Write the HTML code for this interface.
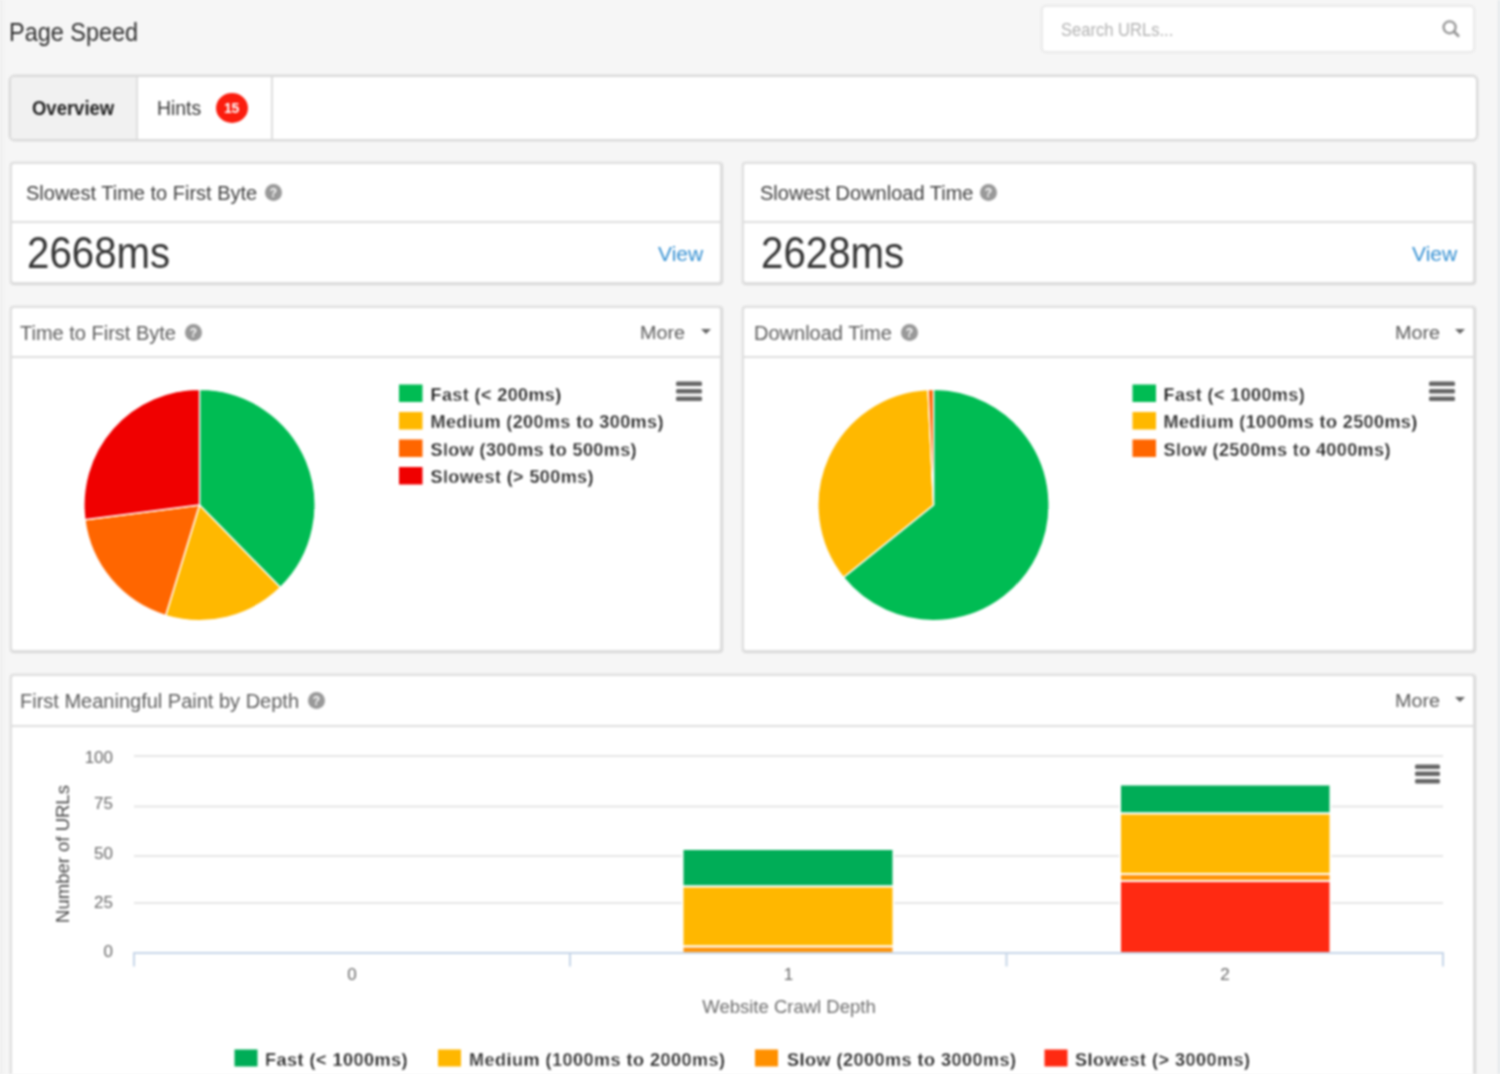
<!DOCTYPE html>
<html lang="en">
<head>
<meta charset="utf-8">
<title>Page Speed</title>
<style>
*{box-sizing:border-box;margin:0;padding:0}
html,body{width:1500px;height:1074px;overflow:hidden}
body{filter:blur(1px);background:#f6f6f6;font-family:"Liberation Sans",sans-serif;color:#555;position:relative}
.t{position:absolute;line-height:1;white-space:nowrap;transform-origin:0 0;font-weight:400}
.card{position:absolute;background:#fff;border:2px solid #dedede;border-radius:4px;box-shadow:.5px .5px 1.5px rgba(0,0,0,.14)}
.card .hd{position:absolute;left:0;right:0;top:0;border-bottom:2px solid #dedede}
h1.t{font-size:26px;color:#303030}
.q{position:absolute;width:17px;height:17px}
.caret{position:absolute;width:0;height:0;border-left:5px solid transparent;border-right:5px solid transparent;border-top:5px solid #666}
svg{position:absolute;left:0;top:0;overflow:visible}
svg text{font-family:"Liberation Sans",sans-serif}
</style>
</head>
<body>

<i style="position:absolute;left:1498px;top:-5px;width:8px;height:1090px;background:#e3e7eb"></i>
<i style="position:absolute;left:-4px;top:-5px;width:9px;height:1090px;background:linear-gradient(90deg,#ededed 45%,rgba(246,246,246,0))"></i>
<!-- ===== header ===== -->
<h1 class="t" style="left:9px;top:19px;font-size:26.5px;transform:scaleX(.885)">Page Speed</h1>

<div id="search" class="card" style="left:1041px;top:5px;width:434px;height:48px;border-color:#e9e9e9;border-radius:5px;box-shadow:0 0 2px rgba(0,0,0,.04)">
  <span class="t" style="left:18px;top:14px;font-size:18px;color:#b2b2b2;transform:scaleX(.92)">Search URLs...</span>
  <svg width="24" height="24" viewBox="0 0 24 24" style="left:397px;top:10px"><circle cx="9.6" cy="10.3" r="6" fill="none" stroke="#969696" stroke-width="2.3"/><path d="M13.9 14.6 L18.2 18.7" stroke="#969696" stroke-width="2.8" stroke-linecap="round"/></svg>
</div>

<!-- ===== tabs ===== -->
<nav id="tabs" class="card" style="left:9px;top:75px;width:1469px;height:66px;border-color:#dadada;border-radius:6px;box-shadow:0 0 2px rgba(0,0,0,.16)">
  <a style="position:absolute;left:0;top:0;width:126.5px;height:62px;background:#f1f1f1;border-right:2px solid #dfdfdf;border-radius:4px 0 0 4px">
    <b class="t" style="left:21px;top:19.5px;font-size:21px;color:#1e1e1e;font-weight:700;transform:scaleX(.88)">Overview</b>
  </a>
  <a style="position:absolute;left:126px;top:0;width:135.5px;height:62px;border-right:2px solid #dfdfdf">
    <span class="t" style="left:20px;top:21px;font-size:20px;color:#353535;transform:scaleX(.97)">Hints</span>
    <span style="position:absolute;left:79px;top:15.5px;width:32px;height:30px;border-radius:50%;background:#fb1d0e"></span>
    <span class="t" style="left:87px;top:24px;font-size:14px;color:#fff;font-weight:700;letter-spacing:-.4px">15</span>
  </a>
</nav>

<!-- ===== stat cards ===== -->
<section id="c1" class="card" style="left:10px;top:162px;width:712px;height:122px">
  <div class="hd" style="height:59px"></div>
  <span class="t" style="left:14px;top:19px;font-size:20px;color:#3e3e3e">Slowest Time to First Byte</span>
  <svg class="q" viewBox="0 0 17 17" style="left:253px;top:20px"><circle cx="8.5" cy="8.5" r="8.5" fill="#999"/><text x="8.5" y="13" font-size="12" font-weight="700" fill="#fff" text-anchor="middle">?</text></svg>
  <span class="t" style="left:15px;top:67.5px;font-size:43.5px;color:#363636;transform:scaleX(.925)">2668ms</span>
  <a class="t" style="left:646px;top:78.5px;font-size:21px;color:#3590d2">View</a>
</section>

<section id="c2" class="card" style="left:742px;top:162px;width:733px;height:122px">
  <div class="hd" style="height:59px"></div>
  <span class="t" style="left:16px;top:19px;font-size:20px;color:#3e3e3e">Slowest Download Time</span>
  <svg class="q" viewBox="0 0 17 17" style="left:236px;top:20px"><circle cx="8.5" cy="8.5" r="8.5" fill="#999"/><text x="8.5" y="13" font-size="12" font-weight="700" fill="#fff" text-anchor="middle">?</text></svg>
  <span class="t" style="left:17px;top:67.5px;font-size:43.5px;color:#363636;transform:scaleX(.925)">2628ms</span>
  <a class="t" style="left:668px;top:78.5px;font-size:21px;color:#3590d2">View</a>
</section>

<!-- ===== pie cards ===== -->
<section id="c3" class="card" style="left:10px;top:306px;width:712px;height:346px">
  <div class="hd" style="height:50px"></div>
  <span class="t" style="left:8px;top:15px;font-size:20px;color:#5c5c5c">Time to First Byte</span>
  <svg class="q" viewBox="0 0 17 17" style="left:173px;top:16px"><circle cx="8.5" cy="8.5" r="8.5" fill="#999"/><text x="8.5" y="13" font-size="12" font-weight="700" fill="#fff" text-anchor="middle">?</text></svg>
  <span class="t" style="left:628px;top:15.5px;font-size:18px;color:#5c5c5c;transform:scaleX(1.1)">More</span>
  <i class="caret" style="left:689px;top:21px"></i>
</section>

<section id="c4" class="card" style="left:742px;top:306px;width:733px;height:346px">
  <div class="hd" style="height:50px"></div>
  <span class="t" style="left:10px;top:15px;font-size:20px;color:#5c5c5c">Download Time</span>
  <svg class="q" viewBox="0 0 17 17" style="left:156.5px;top:16px"><circle cx="8.5" cy="8.5" r="8.5" fill="#999"/><text x="8.5" y="13" font-size="12" font-weight="700" fill="#fff" text-anchor="middle">?</text></svg>
  <span class="t" style="left:651px;top:15.5px;font-size:18px;color:#5c5c5c;transform:scaleX(1.1)">More</span>
  <i class="caret" style="left:711px;top:21px"></i>
</section>

<!-- ===== bar card ===== -->
<section id="c5" class="card" style="left:10px;top:674px;width:1465px;height:420px">
  <div class="hd" style="height:51px"></div>
  <span class="t" style="left:8px;top:15px;font-size:20px;color:#5c5c5c">First Meaningful Paint by Depth</span>
  <svg class="q" viewBox="0 0 17 17" style="left:296px;top:16px"><circle cx="8.5" cy="8.5" r="8.5" fill="#999"/><text x="8.5" y="13" font-size="12" font-weight="700" fill="#fff" text-anchor="middle">?</text></svg>
  <span class="t" style="left:1383px;top:15.5px;font-size:18px;color:#5c5c5c;transform:scaleX(1.1)">More</span>
  <i class="caret" style="left:1443px;top:21px"></i>
</section>

<!-- ===== charts (page coordinates) ===== -->
<svg id="charts" width="1500" height="1074" viewBox="0 0 1500 1074">
  <!-- pie 1 -->
  <g stroke="#fff" stroke-width="1.4" stroke-linejoin="round">
    <path d="M199.5,505 L199.50,389.40 A115.6,115.6 0 0 1 280.38,587.59 Z" fill="#00bc53"/>
    <path d="M199.5,505 L280.38,587.59 A115.6,115.6 0 0 1 165.70,615.55 Z" fill="#ffb800"/>
    <path d="M199.5,505 L165.70,615.55 A115.6,115.6 0 0 1 84.84,519.69 Z" fill="#ff6600"/>
    <path d="M199.5,505 L84.84,519.69 A115.6,115.6 0 0 1 199.50,389.40 Z" fill="#f00000"/>
  </g>
  <!-- pie 1 legend -->
  <g font-size="18" font-weight="700" fill="#1c1c1c" letter-spacing=".4" stroke="#fff" stroke-width=".3">
    <rect x="399" y="384.5" width="23.5" height="17.5" stroke="none" fill="#00bc53"/><text x="430.5" y="400.5">Fast (&lt; 200ms)</text>
    <rect x="399" y="412" width="23.5" height="17.5" stroke="none" fill="#ffb800"/><text x="430.5" y="428">Medium (200ms to 300ms)</text>
    <rect x="399" y="439.5" width="23.5" height="17.5" stroke="none" fill="#ff6600"/><text x="430.5" y="455.5">Slow (300ms to 500ms)</text>
    <rect x="399" y="467" width="23.5" height="17.5" stroke="none" fill="#f00000"/><text x="430.5" y="483">Slowest (&gt; 500ms)</text>
  </g>
  <g fill="#666"><rect x="676" y="381.5" width="26" height="4.5" rx="1.5"/><rect x="676" y="389" width="26" height="4.5" rx="1.5"/><rect x="676" y="396.5" width="26" height="4.5" rx="1.5"/></g>

  <!-- pie 2 -->
  <g stroke="#fff" stroke-width="1.4" stroke-linejoin="round">
    <path d="M933.5,505 L933.50,389.40 A115.6,115.6 0 1 1 843.41,577.44 Z" fill="#00bc53"/>
    <path d="M933.5,505 L843.41,577.44 A115.6,115.6 0 0 1 928.05,389.53 Z" fill="#ffb800"/>
    <path d="M933.5,505 L928.05,389.53 A115.6,115.6 0 0 1 933.50,389.40 Z" fill="#ff6600"/>
  </g>
  <!-- pie 2 legend -->
  <g font-size="18" font-weight="700" fill="#1c1c1c" letter-spacing=".4" stroke="#fff" stroke-width=".3">
    <rect x="1132.5" y="384.5" width="23.5" height="17.5" stroke="none" fill="#00bc53"/><text x="1163.5" y="400.5">Fast (&lt; 1000ms)</text>
    <rect x="1132.5" y="412" width="23.5" height="17.5" stroke="none" fill="#ffb800"/><text x="1163.5" y="428">Medium (1000ms to 2500ms)</text>
    <rect x="1132.5" y="439.5" width="23.5" height="17.5" stroke="none" fill="#ff6600"/><text x="1163.5" y="455.5">Slow (2500ms to 4000ms)</text>
  </g>
  <g fill="#666"><rect x="1429" y="381.5" width="26" height="4.5" rx="1.5"/><rect x="1429" y="389" width="26" height="4.5" rx="1.5"/><rect x="1429" y="396.5" width="26" height="4.5" rx="1.5"/></g>

  <!-- bar chart -->
  <g stroke="#e6e6e6" stroke-width="2">
    <path d="M134 756H1443M134 806.5H1443M134 856H1443M134 903H1443"/>
  </g>
  <g font-size="17" fill="#686868" text-anchor="end">
    <text x="113" y="763">100</text><text x="113" y="809">75</text><text x="113" y="858.5">50</text><text x="113" y="907.5">25</text><text x="113" y="956.5">0</text>
  </g>
  <g font-size="17" fill="#686868" text-anchor="middle">
    <text x="352" y="980">0</text><text x="788.5" y="980">1</text><text x="1225" y="980">2</text>
  </g>
  <text x="789" y="1013" font-size="18.5" fill="#6e6e6e" text-anchor="middle">Website Crawl Depth</text>
  <text transform="translate(69,854) rotate(-90)" font-size="18.5" fill="#484848" text-anchor="middle">Number of URLs</text>
  <!-- bar 1 -->
  <g stroke="#fff" stroke-width="2">
    <rect x="682.5" y="849" width="211" height="37.5" fill="#00ad57"/>
    <rect x="682.5" y="886.5" width="211" height="60" fill="#ffb700"/>
    <rect x="682.5" y="946.5" width="211" height="7" fill="#ff9408"/>
  </g>
  <!-- bar 2 -->
  <g stroke="#fff" stroke-width="2">
    <rect x="1120" y="784.5" width="210.5" height="29" fill="#00ad57"/>
    <rect x="1120" y="813.5" width="210.5" height="60.5" fill="#ffb700"/>
    <rect x="1120" y="874" width="210.5" height="7" fill="#ff9408"/>
    <rect x="1120" y="881" width="210.5" height="72" fill="#ff2a12"/>
  </g>
  <path d="M134 966.5V953H1443V966.5M570 953V966.5M1006.5 953V966.5" fill="none" stroke="#c7d6e8" stroke-width="2"/>
  <g fill="#666"><rect x="1415" y="764.5" width="25" height="4.5" rx="1.5"/><rect x="1415" y="771.5" width="25" height="4.5" rx="1.5"/><rect x="1415" y="779" width="25" height="4.5" rx="1.5"/></g>
  <!-- bar legend -->
  <g font-size="18" font-weight="700" fill="#1c1c1c" letter-spacing=".5" stroke="#fff" stroke-width=".3">
    <rect x="234.5" y="1049.5" width="23" height="17" stroke="none" fill="#00ad57"/><text x="265" y="1065.8">Fast (&lt; 1000ms)</text>
    <rect x="438" y="1049.5" width="23" height="17" stroke="none" fill="#ffb700"/><text x="469" y="1065.8">Medium (1000ms to 2000ms)</text>
    <rect x="755" y="1049.5" width="23" height="17" stroke="none" fill="#ff9000"/><text x="787" y="1065.8">Slow (2000ms to 3000ms)</text>
    <rect x="1044.5" y="1049.5" width="23" height="17" stroke="none" fill="#ff2a12"/><text x="1075" y="1065.8">Slowest (&gt; 3000ms)</text>
  </g>
</svg>

</body>
</html>
